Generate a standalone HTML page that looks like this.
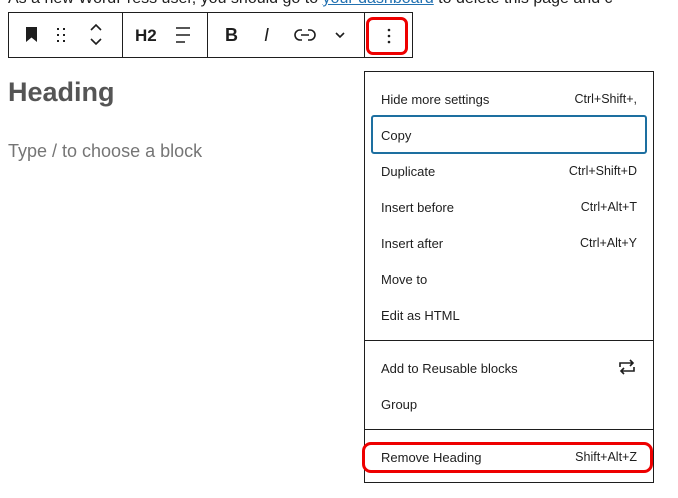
<!DOCTYPE html>
<html><head><style>
body{margin:0;width:678px;height:498px;overflow:hidden;background:#fff;font-family:"Liberation Sans",sans-serif;position:relative;color:#1e1e1e}
.a{position:absolute}
.top{left:8px;top:-10px;font-size:16px;white-space:nowrap;color:#1e1e1e}
.top span{color:#2271b1;text-decoration:underline}
.tb{left:8px;top:12px;width:405px;height:46px;border:1px solid #1e1e1e;box-sizing:border-box}
.dv{top:12px;width:1px;height:46px;background:#1e1e1e}
.menu{left:364px;top:71px;width:290px;height:412px;border:1px solid #1e1e1e;box-sizing:border-box}
.it{left:381px;font-size:13px;color:#1e1e1e;white-space:nowrap}
.sc{right:41px;font-size:12.5px;color:#1e1e1e;white-space:nowrap}
.hr{left:365px;width:288px;height:1px;background:#1e1e1e}
</style></head><body>
<div class="a top">As a new WordPress user, you should go to <span>your dashboard</span> to delete this page and c</div>
<div class="a tb"></div>
<div class="a dv" style="left:122px"></div>
<div class="a dv" style="left:207px"></div>
<div class="a dv" style="left:364px"></div>
<svg class="a" style="left:24px;top:26px" width="16" height="18"><path d="M2 1h11v15l-5.5-4.5L2 16z" fill="#1e1e1e"/></svg>
<svg class="a" style="left:54px;top:26px" width="16" height="18" fill="#1e1e1e"><rect x="3" y="2" width="2" height="2"/><rect x="9" y="2" width="2" height="2"/><rect x="3" y="8" width="2" height="2"/><rect x="9" y="8" width="2" height="2"/><rect x="3" y="14" width="2" height="2"/><rect x="9" y="14" width="2" height="2"/></svg>
<svg class="a" style="left:88px;top:22px" width="16" height="26" fill="none" stroke="#1e1e1e" stroke-width="1.6"><path d="M3 8l5-5 5 5M3 17l5 5 5-5"/></svg>
<div class="a" style="left:135px;top:26px;font-weight:bold;font-size:17px">H2</div>
<svg class="a" style="left:174px;top:25px" width="18" height="20" stroke="#1e1e1e" stroke-width="1.5"><path d="M2 3h14M2 10h14M2 17h9"/></svg>
<div class="a" style="left:225px;top:25px;font-weight:bold;font-size:18px">B</div>
<div class="a" style="left:264px;top:25px;font-style:italic;font-size:18px">I</div>
<svg class="a" style="left:294px;top:27px" width="22" height="16" fill="none" stroke="#1e1e1e" stroke-width="1.6"><path d="M8 3H6a5 5 0 000 10h2M14 3h2a5 5 0 010 10h-2M7 8h8"/></svg>
<svg class="a" style="left:333px;top:30px" width="14" height="10" fill="none" stroke="#1e1e1e" stroke-width="1.6"><path d="M3 3l4 4 4-4"/></svg>
<svg class="a" style="left:386px;top:27px" width="6" height="18" fill="#1e1e1e"><circle cx="3" cy="3" r="1.3"/><circle cx="3" cy="9" r="1.3"/><circle cx="3" cy="15" r="1.3"/></svg>
<div class="a" style="left:366px;top:17px;width:42px;height:38px;border:3px solid #e00;border-radius:7px;box-sizing:border-box"></div>
<div class="a" style="left:8px;top:77px;font-weight:bold;font-size:27px;color:#555">Heading</div>
<div class="a" style="left:8px;top:141px;font-size:18px;color:#757575">Type / to choose a block</div>
<div class="a menu"></div>
<div class="a it" style="top:92px">Hide more settings</div><div class="a sc" style="top:92px">Ctrl+Shift+,</div>
<div class="a" style="left:371px;top:115px;width:276px;height:39px;border:2px solid #1d6fa0;border-radius:3px;box-sizing:border-box"></div>
<div class="a it" style="top:128px">Copy</div>
<div class="a it" style="top:164px">Duplicate</div><div class="a sc" style="top:164px">Ctrl+Shift+D</div>
<div class="a it" style="top:200px">Insert before</div><div class="a sc" style="top:200px">Ctrl+Alt+T</div>
<div class="a it" style="top:236px">Insert after</div><div class="a sc" style="top:236px">Ctrl+Alt+Y</div>
<div class="a it" style="top:272px">Move to</div>
<div class="a it" style="top:308px">Edit as HTML</div>
<div class="a hr" style="top:340px"></div>
<div class="a it" style="top:361px">Add to Reusable blocks</div>
<svg class="a" style="left:617px;top:358px" width="20" height="18" fill="none" stroke="#1e1e1e" stroke-width="1.6"><path d="M3 9V5h13M13 2l3 3-3 3M17 9v4H4M7 16l-3-3 3-3"/></svg>
<div class="a it" style="top:397px">Group</div>
<div class="a hr" style="top:429px"></div>
<div class="a it" style="top:450px">Remove Heading</div><div class="a sc" style="top:450px">Shift+Alt+Z</div>
<div class="a" style="left:362px;top:442px;width:291px;height:31px;border:3px solid #e00;border-radius:9px;box-sizing:border-box"></div>
</body></html>
